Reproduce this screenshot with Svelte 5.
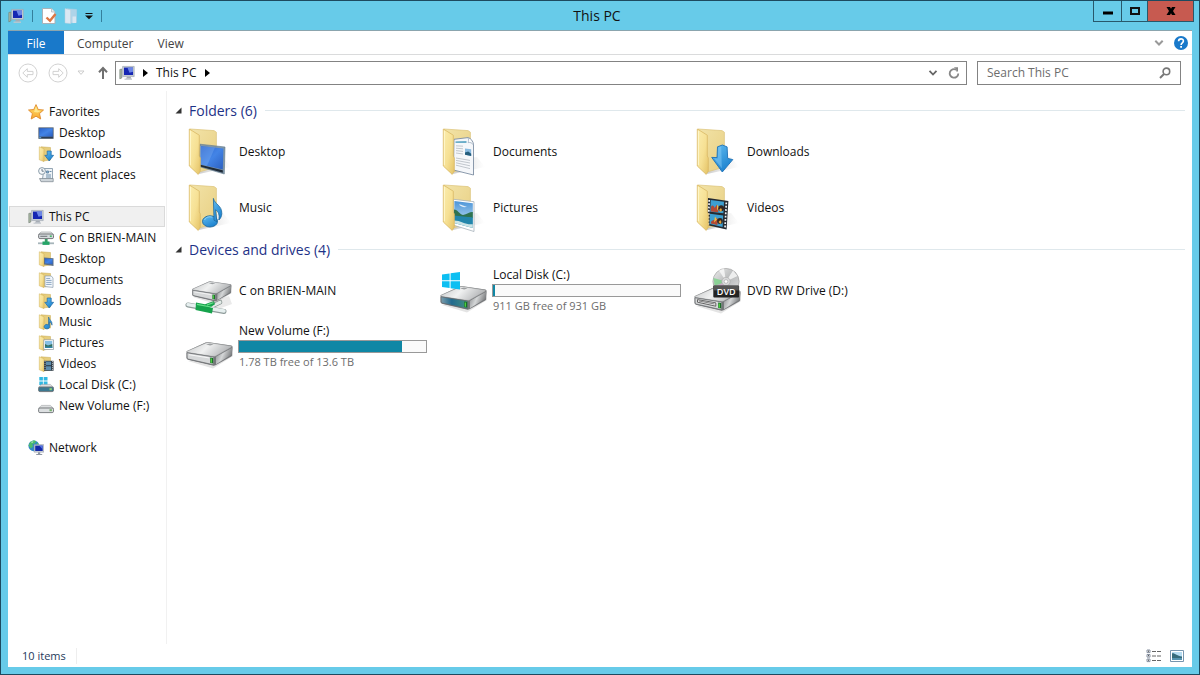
<script>
  const favorites = [
    { icon: 'desktop', label: 'Desktop' },
    { icon: 'f-downloads', label: 'Downloads' },
    { icon: 'recent', label: 'Recent places' }
  ];
  const places = [
    { icon: 'netdrive', label: 'C on BRIEN-MAIN' },
    { icon: 'f-desktop', label: 'Desktop' },
    { icon: 'f-documents', label: 'Documents' },
    { icon: 'f-downloads', label: 'Downloads' },
    { icon: 'f-music', label: 'Music' },
    { icon: 'f-pictures', label: 'Pictures' },
    { icon: 'f-videos', label: 'Videos' },
    { icon: 'osdrive', label: 'Local Disk (C:)' },
    { icon: 'drive', label: 'New Volume (F:)' }
  ];
  const tree = [
    { icon: 'star', label: 'Favorites', children: favorites },
    { icon: 'pc', label: 'This PC', selected: true, children: places },
    { icon: 'network', label: 'Network', children: [] }
  ];
  const folders = ['Desktop', 'Documents', 'Downloads', 'Music', 'Pictures', 'Videos'];
  const drives = [
    { kind: 'net', label: 'C on BRIEN-MAIN' },
    { kind: 'os', label: 'Local Disk (C:)', used: 1, free: '911 GB free of 931 GB' },
    { kind: 'dvd', label: 'DVD RW Drive (D:)' },
    { kind: 'plain', label: 'New Volume (F:)', used: 87, free: '1.78 TB free of 13.6 TB' }
  ];
  let query = $state('');
  let openFolders = $state(true);
  let openDrives = $state(true);
</script>

{#snippet smallIcon(name)}
  <svg class="small" viewBox="0 0 16 16" aria-hidden="true">
    {#if name.startsWith('f-')}
      <path d="M3 .8 12.5 1.5V14L5 15z" fill="#e6cd7c" stroke="#c9aa53" stroke-width=".5" />
      <path d="M1.3.8 6 2.8V15.6L1.3 13.8z" fill="url(#flap)" stroke="#cfae55" stroke-width=".5" />
    {/if}
    {#if name === 'pc'}
      <path d="M.8 4.5 2.8 4V13l-2 .8z" fill="#a9b8a2" stroke="#6f7b72" stroke-width=".6" />
      <path d="M3.6 1.4h11.6v10.2H3.6z" fill="#c4cbd2" stroke="#9aa3ad" stroke-width=".6" />
      <path d="M5 2.6h9v7.4H5z" fill="#1627b3" />
      <path d="M8.4 2.6H14v4.2L10.5 7.8z" fill="#6c86e6" />
      <path d="M8 11.8h3.6l.8 2H7z" fill="#a6acb4" />
      <path d="M5.5 13.6h7.5v1.2H5.5z" fill="#c3c8ce" />
    {:else if name === 'star'}
      <path d="M8 .6 10.2 5.5 15.5 6 11.5 9.6 12.7 15 8 12.2 3.2 15 4.4 9.6.5 6 5.8 5.5z" fill="url(#gold)" stroke="#e08a2c" stroke-width=".9" stroke-linejoin="round" />
      <path d="M8 2.6 9.5 6.4 13 6.8 9.9 8.6 6 8z" fill="#fff3a6" opacity=".7" />
    {:else if name === 'desktop'}
      <path d="M.4 2.4h15.2v11.4H.4z" fill="#4b5869" />
      <path d="M1.2 3.2h13.6v8.4H1.2z" fill="url(#screen)" />
      <path d="M1.2 12.2h13.6v1H1.2z" fill="#27384b" /><path d="M1.2 12.2h2v1h-2z" fill="#68b6e7" />
    {:else if name === 'recent'}
      <path d="M6 1.5h8.5V12H4.5z" fill="#eef3f7" stroke="#7c91a2" stroke-width=".8" />
      <path d="M8.5 4h2v2h-2zM11.5 4.5h2M8 8h5M8 10h5" stroke="#6b8ca8" fill="#7fb1d8" />
      <path d="M1.5 11.5h13.7v3.2H3z" fill="#ced5da" stroke="#7a858e" stroke-width=".7" />
      <circle cx="4" cy="4" r="3.4" fill="#f6f9fb" stroke="#7f929f" stroke-width=".9" /><path d="M4 2v2.2h1.8" fill="none" stroke="#4c6173" stroke-width=".8" />
    {:else if name === 'f-downloads'}
      <path d="M9.2 5h4v4.3h2.4L11.2 15 6.8 9.3h2.4z" fill="url(#blue)" stroke="#1e68a5" stroke-width=".7" />
    {:else if name === 'f-desktop'}
      <path d="M6 6.6 15.5 7.2V15L6 13.6z" fill="#5d6f83" /><path d="M7 7.6 14.6 8.1V13.2L7 12.3z" fill="url(#screen)" />
    {:else if name === 'f-documents'}
      <path d="M7 4h6.3L15 6v9.4L7 14.6z" fill="#f5f9fd" stroke="#8798aa" stroke-width=".7" /><path d="M8.2 6.4h4M8.2 8.4h5.4M8.2 10.4h5.4M8.2 12.4h5.4" stroke="#7f9cbb" stroke-width=".9" />
    {:else if name === 'f-music'}
      <path d="M10.6 3c.4 3 4.2 4 3.4 8.2-.4-2-1.4-3-2.4-3.2l.1 4.8a2.8 2.2 0 1 1-1.2-1.9z" fill="url(#blue)" stroke="#1c5f96" stroke-width=".6" />
    {:else if name === 'f-pictures'}
      <path d="M5.8 4.8h9.7v9.7H5.8z" fill="#fff" stroke="#8b97a1" stroke-width=".7" /><path d="M7 6h7.3v7H7z" fill="#86bfe4" /><path d="M7 9l3 1.5L14.3 9v4H7z" fill="#38705b" /><path d="M7 11.5h7.3V13H7z" fill="#2f84a8" />
    {:else if name === 'f-videos'}
      <path d="M6 4.8h9.5v10H6z" fill="#28323b" /><path d="M8 5.5h5.2v3.8H8zM8 10.2h5.2v4H8z" fill="#5d8cad" /><path d="M7 5.2V15M14.5 5.2V15" stroke="#dce4ea" stroke-width=".9" stroke-dasharray="1 1" />
    {:else if name === 'drive' || name === 'osdrive'}
      {#if name === 'osdrive'}
        <path d="M1.3 0h3.6v3.6H1.3zM5.7 0h3.8v3.6H5.7zM1.3 4.4h3.6V8H1.3zM5.7 4.4h3.8V8H5.7z" fill="#31b8e2" />
      {/if}
      <path d="M3.4 7.4h9L15.5 10.4H.5z" fill="#dcdedf" stroke="#a1a5a8" stroke-width=".6" />
      <rect x=".6" y="10" width="14.9" height="4.6" rx="1.3" fill={name === 'drive' ? '#dcdfe1' : '#3c7891'} stroke="#6d7275" stroke-width=".9" />
      <path d="M11.5 11.2h2.4v2h-2.4z" fill={name === 'drive' ? '#75ae6e' : '#8bd374'} />
    {:else if name === 'netdrive'}
      <path d="M3 2h10l2.5 2.4H.5z" fill="#e5e7e8" stroke="#979b9e" stroke-width=".6" />
      <rect x=".6" y="4" width="14.9" height="4.6" rx="1.3" fill="#d5d9dc" stroke="#66696c" stroke-width=".9" />
      <path d="M2.3 6.3h7" stroke="#6d7377" /><path d="M11.8 5.4h2v1.6h-2z" fill="#47b768" />
      <path d="M6.8 9h2.8v3H6.8z" fill="#3d9a67" /><path d="M0 12.4h16v1.8H0z" fill="#a6b5ba" /><path d="M4.5 11.5h7v3.4h-7z" fill="#25a568" />
    {:else if name === 'network'}
      <circle cx="5.8" cy="5.8" r="5.4" fill="#2f86c8" /><path d="M2 2.4C4 .4 7 .2 8.3 1.2L6.8 3.5 4.4 4 5 6.4 2.8 8.5.6 5.6zM9 2l2.2 3-2.4.8z" fill="#4dbb6b" /><path d="M3 1.8 5.6 1.4 4 3z" fill="#d0f1df" />
      <path d="M6.2 4.6h9.5v7.6H6.2z" fill="#d0d5dc" stroke="#89919c" stroke-width=".5" /><path d="M7.2 5.6h7.5v5.4H7.2z" fill="#1429a9" /><path d="M11 5.6h3.7v3.6z" fill="#5473e0" /><path d="M10 12.3h2.2v1.8h2v1H8.2v-1H10z" fill="#8e96a3" />
    {/if}
  </svg>
{/snippet}

{#snippet folderIcon(name)}
  <svg class="large" viewBox="0 0 48 48" aria-hidden="true">
    <path d="M14 46 L46 39 L38 29 L16 32z" fill="url(#shade)" />
    <path d="M5 1 29 2.6l2.4 1.6V39L14 44z" fill="url(#back)" stroke="#dcc47b" stroke-width=".7" />
    {#if name === 'Desktop'}
      <path d="M15 16.2 40 19 39.3 46 14 38.6z" fill="#7f96a9" stroke="#62788a" stroke-width=".6" />
      <path d="M16 18 38.4 20.5 37.8 41.6 15.6 36.4z" fill="url(#screen)" />
      <path d="M15 18 30 19.6 22 37.8 15 36.2z" fill="#8dbdf6" opacity=".3" />
      <path d="M14.4 36.6 37.8 42.2 37.8 44.8 14.2 38.2z" fill="#1f2b38" />
    {:else if name === 'Documents'}
      <path d="M15 11.3 29 9.6c3 .6 5.4 4 5.5 7V47L14.5 42z" fill="#f5f7fa" stroke="#6f8298" stroke-width=".8" />
      <path d="M29 9.6c1 2 .4 4 .2 5 2-.6 4 .4 5.3 2.4" fill="#fff" stroke="#7f96ad" stroke-width=".6" />
      <path d="M16.5 14.2 27.5 14" stroke="#3d94b7" stroke-width="1.3" />
      <path d="M17 17.8l7 .4M17 20.2l7 .6M17 22.6l7 .8M17 25l7 1M17 30l14 2.4M17 32.4l14 2.6M17 34.8l14 3M17 37.2l14 3.4" stroke="#b4bac2" stroke-width=".8" />
      <path d="M26 20.5 32.2 21.2V28L26 26.8z" fill="#8abbe0" /><path d="M26 24.5l3.2-1 3 2.3V28L26 26.8z" fill="#245d7c" />
    {:else if name === 'Downloads'}
      <path d="M24.5 18.8 29.4 17 34.1 18.9 34.7 30.4 39.8 31.6 29.3 44 18.7 29.4 24 29.6z" fill="url(#blue)" stroke="#1d70b7" stroke-width=".9" />
      <path d="M25.3 19.5 28.2 18.3 28.8 40.3 21 30.2 24.8 30.5z" fill="#8bd0fa" opacity=".45" />
    {:else if name === 'Music'}
      <ellipse cx="25" cy="37.4" rx="7.5" ry="5.6" fill="url(#blue)" stroke="#1c689e" stroke-width=".9" />
      <path d="M28.4 14.4c1.4 6 8.6 7 8.4 15-.1 3-1.3 5.2-3 6.6 1-4.8-.3-8.5-3.3-10.2L32 37.8l-3-1.6z" fill="url(#blue)" stroke="#1c689e" stroke-width=".8" />
      <path d="M19.6 36c1-3 5-3.8 7.6-2.8" fill="none" stroke="#8fd4f5" stroke-width="1" />
    {:else if name === 'Pictures'}
      <path d="M14.4 15.3 35 17.7V47.5L14 41z" fill="#fff" stroke="#9ba8b1" stroke-width=".7" />
      <path d="M15.4 17 33.8 19.3V44L15 39z" fill="url(#sky)" />
      <path d="M15 25.5c4 0 5 4.5 9 5.5 4-1 7-3.4 9.8-3V34L15 32.5z" fill="#2f7350" /><path d="M15 31.5 33.8 33.5V44L15 39z" fill="#2386ab" /><path d="M15 36.4c7 0 12 4.8 18.8 3.8V44L15 39z" fill="#cce4e5" />
      <path d="M20 20.2c3 .2 5 2 8 2.6-3 1-7-.4-8-2.6z" fill="#fff" opacity=".8" />
    {:else}
      <path d="M15 14 35.4 17 33.6 45.6 13.7 41z" fill="#242a31" />
      <path d="M17.7 16 31 17.8 30.4 29.3 17.2 27.8zM17 29.8 30.2 31.6 29.6 43 16.6 40z" fill="#3d9fd0" />
      <path d="M18 23c1.4-3 3-1 3.6 1l2-3 2 1.6-.4 5.6-7.4-.8zM18 38c2-3 4-1 5-4l2 1-.6 6-6.6-1.4z" fill="#b34a34" />
      <path d="M24 20.5l2 3-2 3zM22 32.5l2 3-3 3z" fill="#f0bd42" /><circle cx="28.2" cy="24.2" r="2.9" fill="#342620" /><circle cx="27" cy="37" r="2.9" fill="#342620" /><path d="M26 26l2-2 1 2-1 2zM25.5 38l1.8-2 1.2 2-1 2z" fill="#e5a338" />
      <path d="M16.2 16 15.3 41M33.3 18.5 32 44.4" stroke="#f3f5f7" stroke-width="1.7" stroke-dasharray="1.8 1.5" />
    {/if}
    <path d="M4.3 1 14.3 7.2V28L15.3 30V43L13.2 46.4 4.3 38z" fill="url(#flap)" stroke="#d9b965" stroke-width=".8" stroke-linejoin="round" />
    <path d="M5.4 2.8V37.2" stroke="#fff8cf" stroke-width=".9" />
  </svg>
{/snippet}

{#snippet driveBody(dvd, os)}
  <path d="M3 38 28 45.5 48 33 46 27z" fill="#777" opacity=".2" />
  <path d="M1.6 28.2 20.5 19.6q1.6-.6 3.3-.3l22.6 3.2q1.4.5 1.2 1.7l-.4 7.5q0 1-1 1.7L30.5 42.2q-1.3.7-2.8.3L3 36.8Q1.6 36.2 1.5 35z" fill="#77797c" />
  <path d="M2 28.2 21 20q1.6-.5 3-.2L46 23q1.4.4.3 1.2L30.8 33q-1.3.6-2.8.4L3 29.5q-1.6-.5-1-1.3z" fill="url(#metal)" stroke="#929496" stroke-width=".4" />
  <path d="M31 33.7 47.2 24.7 46.8 31.6 31 41.3z" fill="url(#side)" />
  <path d="M2 29.8 28.8 34 28.6 41.8 3 36q-.7-.2-.8-1z" fill={os ? 'url(#osface)' : '#d6d8d9'} stroke="#66696c" stroke-width=".7" />
  <path d="M4 31.7 24 34.9" stroke="#fff" opacity={os ? 0 : 0.8} />
  <path d="M21 21.5l4-.9 3.6.8-3.5 1.1z" fill="#9da0a2" />
  <path d="M25.2 34.6 28.2 35.1V40.6L25.2 40z" fill="#1b6b2a" /><path d="M26.3 35.5V39.7" stroke="#54e342" stroke-width="1.1" />
  {#if dvd}
    <path d="M4.5 31.6 22.8 34.8V38.2L4.5 34.2z" fill="#eee" stroke="#444" stroke-width=".8" /><path d="M6 33 21.5 36" stroke="#555" stroke-width=".7" />
  {/if}
{/snippet}

{#snippet driveIcon(kind)}
  <svg class="large" viewBox="0 0 48 48" aria-hidden="true">
    {#if kind === 'net'}
      <path d="M28 44 47 37 44 29 22 36z" fill="#888" opacity=".18" />
      <path d="M25 40 35 35.2" stroke="#7e8c88" stroke-width="4.6" stroke-linecap="round" /><path d="M26 39.5 35 35.2" stroke="#e3ebe8" stroke-width="3.2" stroke-linecap="round" />
      <path d="M3 38 39 44.5" stroke="#8f9c9b" stroke-width="5" stroke-linecap="round" /><path d="M3 37.6 39 44" stroke="#e6efef" stroke-width="3.4" stroke-linecap="round" />
      <path d="M11 35.6 20 37.2 29 34 30 37.2 25 40.5 28 41 27 46.4 10.5 43z" fill="#16a34c" /><path d="M12 37.3 26 40M22 38 28.4 35.6" stroke="#66df89" stroke-width="1.2" />
      <g transform="translate(6 -2) scale(.85)">{@render driveBody(false, false)}</g>
    {:else if kind === 'plain'}
      {@render driveBody(false, false)}
    {:else if kind === 'os'}
      {@render driveBody(false, true)}
      <path d="M3 7.6 10.6 6.5V13.3H3zM11.6 6.3 21 5V13.3H11.6zM3 14.3H10.6V21.1L3 20zM11.6 14.3H21V22.4L11.6 21.2z" fill="#0dbff2" />
    {:else}
      <g transform="translate(0 1)">{@render driveBody(true, false)}</g>
      <circle cx="33" cy="14.5" r="13.1" fill="url(#disc)" stroke="#999" stroke-width=".6" />
      <path d="M33 14.5 20.5 11 22 21z" fill="#76d384" opacity=".75" /><path d="M33 14.5 21 19 24 24z" fill="#e0a2d7" opacity=".6" /><path d="M33 14.5 40 3.5 44.5 9z" fill="#fff" opacity=".75" /><path d="M33 14.5 26 3.5 31 1.5z" fill="#fff" opacity=".7" />
      <circle cx="33" cy="14.5" r="4.2" fill="#d8d9da" stroke="#a6a6a6" stroke-width=".6" /><circle cx="33" cy="14.5" r="1.8" fill="#fff" stroke="#999" stroke-width=".5" />
      <rect x="20.3" y="18.6" width="25.8" height="12" rx="1" fill="#232323" /><path d="M20.6 19h25.2v4.4H20.6z" fill="#555" />
      <text x="33.2" y="28.4" text-anchor="middle" class="dvd">DVD</text>
    {/if}
  </svg>
{/snippet}

<div class="window">
  <svg width="0" height="0" aria-hidden="true">
    <defs>
      <linearGradient id="flap" x1="0" x2="1" y2="1"><stop stop-color="#fbedae" /><stop offset=".55" stop-color="#f6e093" /><stop offset="1" stop-color="#e4c265" /></linearGradient>
      <linearGradient id="back" x2="1" y2="1"><stop stop-color="#f2e3a8" /><stop offset="1" stop-color="#e8cf82" /></linearGradient>
      <linearGradient id="shade" x2="1"><stop stop-color="#999" stop-opacity=".5" /><stop offset="1" stop-color="#bbb" stop-opacity="0" /></linearGradient>
      <linearGradient id="screen" x2="1" y2="1"><stop stop-color="#2b62cb" /><stop offset=".5" stop-color="#4384e6" /><stop offset="1" stop-color="#2b5fc0" /></linearGradient>
      <linearGradient id="blue" x2=".6" y2="1"><stop stop-color="#63bdf0" /><stop offset="1" stop-color="#1c82cf" /></linearGradient>
      <linearGradient id="sky" x2="0" y2="1"><stop stop-color="#4b94d8" /><stop offset="1" stop-color="#d4ecf8" /></linearGradient>
      <linearGradient id="gold" x2="0" y2="1"><stop stop-color="#ffe36e" /><stop offset="1" stop-color="#f7a832" /></linearGradient>
      <linearGradient id="metal" x2="1" y2=".3"><stop stop-color="#c6c8c9" /><stop offset=".5" stop-color="#f0f1f1" /><stop offset="1" stop-color="#b4b6b8" /></linearGradient>
      <linearGradient id="side" x2="1" y2=".4"><stop stop-color="#85888a" /><stop offset=".5" stop-color="#d4d6d7" /><stop offset="1" stop-color="#77797b" /></linearGradient>
      <linearGradient id="osface" x2="1"><stop stop-color="#7d9dac" /><stop offset=".4" stop-color="#216a8e" /><stop offset="1" stop-color="#459280" /></linearGradient>
      <linearGradient id="disc" x2="1" y2="1"><stop stop-color="#eee" /><stop offset=".5" stop-color="#b8babb" /><stop offset="1" stop-color="#e5e5e5" /></linearGradient>
    </defs>
  </svg>
  <header class="titlebar">
    <div class="quick">
      {@render smallIcon('pc')}
      <span class="bar"></span>
      <button aria-label="Properties">
        <svg class="small" viewBox="0 0 16 16"><path d="M1.5.5h9L14 4v11.5H1.5z" fill="#fff" stroke="#a9b2b8" /><path d="M10.5.5V4H14" fill="#e9edf0" stroke="#a9b2b8" stroke-width=".7" /><path d="M5.5 9.5 9 12.8 14.5 6" fill="none" stroke="#dc7743" stroke-width="2.4" /></svg>
      </button>
      <button aria-label="New folder">
        <svg class="small" viewBox="0 0 16 16"><path d="M4 .8 13.5 1.5V14.5L6 15z" fill="#afd4e9" stroke="#b7cfe0" stroke-width=".5" /><path d="M2 .6 7.6 2V15.6L2 15z" fill="#dbe8f3" stroke="#bbcedd" stroke-width=".5" /><path d="M9.5 8.5H13V15H9.5z" fill="#d8e6f1" /></svg>
      </button>
      <button aria-label="Customize Quick Access Toolbar">
        <svg width="8" height="8" viewBox="0 0 8 8"><path d="M.5 1.5h7" stroke="#111" /><path d="M0 3.5h8L4 7.3z" fill="#111" /></svg>
      </button>
      <span class="bar"></span>
    </div>
    <h1>This PC</h1>
    <div class="controls">
      <button class="min" aria-label="Minimize"><svg width="12" height="10" viewBox="0 0 12 10"><path d="M1 5.5h10v3H1z" /></svg></button>
      <button class="max" aria-label="Maximize"><svg width="12" height="10" viewBox="0 0 12 10"><path d="M2 2h8v6H2z" fill="none" stroke="#111" stroke-width="2" /></svg></button>
      <button class="close" aria-label="Close"><svg width="12" height="10" viewBox="0 0 12 10"><path d="M1.5 1H5L6 2.8 7 1h3.5L8 5l2.5 4H7L6 7.2 5 9H1.5L4 5z" /></svg></button>
    </div>
  </header>

  <div class="client">
    <nav class="tabs" aria-label="Ribbon">
      <button class="file">File</button>
      <button>Computer</button>
      <button>View</button>
      <span class="fill"></span>
      <button class="glyph" aria-label="Expand the Ribbon"><svg width="10" height="8" viewBox="0 0 10 8"><path d="M1.3 1.8 5 5.5 8.7 1.8" fill="none" stroke="#999" stroke-width="2" /></svg></button>
      <button class="glyph" aria-label="Help"><svg width="14" height="14" viewBox="0 0 14 14"><circle cx="7" cy="7" r="7" fill="#1979ca" /><path d="M4.6 5.2C4.6 2 9.5 2.2 9.4 5c0 1.8-2.3 1.8-2.3 3.9" fill="none" stroke="#fff" stroke-width="1.6" /><path d="M6.2 10h1.8v1.7H6.2z" fill="#fff" /></svg></button>
    </nav>

    <div class="address-row">
      <div class="history">
        <button aria-label="Back"><svg width="20" height="20" viewBox="0 0 20 20"><circle cx="10" cy="10" r="9" fill="none" stroke="#d2d2d2" /><path d="M4.8 10 9.3 5.7V8.4H15v3.2H9.3v2.7z" fill="none" stroke="#cdcdcd" stroke-width=".9" /></svg></button>
        <button aria-label="Forward"><svg width="20" height="20" viewBox="0 0 20 20"><circle cx="10" cy="10" r="9" fill="none" stroke="#d2d2d2" /><path d="M15.2 10 10.7 5.7V8.4H5v3.2h5.7v2.7z" fill="none" stroke="#cdcdcd" stroke-width=".9" /></svg></button>
        <button aria-label="Recent locations"><svg width="8" height="6" viewBox="0 0 8 6"><path d="M1 1h6L4 4.4z" fill="none" stroke="#ccc" /></svg></button>
        <button aria-label="Up"><svg width="10" height="14" viewBox="0 0 10 14"><path d="M5 13V2.5M1 6.3 5 2l4 4.3" fill="none" stroke="#707070" stroke-width="2" /></svg></button>
      </div>
      <div class="address">
        {@render smallIcon('pc')}
        <svg class="crumb" viewBox="0 0 5 8" aria-hidden="true"><path d="M0 0 5 4 0 8z" /></svg>
        <button>This PC</button>
        <svg class="crumb" viewBox="0 0 5 8" aria-hidden="true"><path d="M0 0 5 4 0 8z" /></svg>
        <span class="fill"></span>
        <button aria-label="Previous locations"><svg width="10" height="8" viewBox="0 0 10 8"><path d="M1.5 1.8 5 5.5 8.5 1.8" fill="none" stroke="#666" stroke-width="1.8" /></svg></button>
        <button aria-label="Refresh"><svg width="12" height="12" viewBox="0 0 12 12"><path d="M8.2 2.7A4.3 4.3 0 1 0 10.3 6.4" fill="none" stroke="#888" stroke-width="1.8" /><path d="M5.8.2H10v4.4H8.2V2.2z" fill="#888" /></svg></button>
      </div>
      <div class="search">
        <input type="search" bind:value={query} placeholder="Search This PC" aria-label="Search This PC" />
        <svg width="12" height="12" viewBox="0 0 12 12" aria-hidden="true"><circle cx="7.4" cy="4.4" r="3.3" fill="none" stroke="#777" stroke-width="1.6" /><path d="M5 7 1 11" stroke="#777" stroke-width="2" /></svg>
      </div>
    </div>

    <div class="body">
      <nav class="tree" aria-label="Navigation pane">
        {#each tree as group}
          <div class="group">
            <a class="root" class:selected={group.selected} href="#{group.label}">{@render smallIcon(group.icon)}{group.label}</a>
            {#each group.children as item}
              <a href="#{item.label}">{@render smallIcon(item.icon)}{item.label}</a>
            {/each}
          </div>
        {/each}
      </nav>

      <main>
        <section>
          <h2><button onclick={() => (openFolders = !openFolders)} aria-expanded={openFolders}><svg width="7" height="7" viewBox="0 0 7 7" aria-hidden="true"><path d="M6.5.5V6.5H.5z" /></svg>Folders (6)</button></h2>
          {#if openFolders}
            <div class="tiles">
              {#each folders as name}
                <button class="tile">{@render folderIcon(name)}<span>{name}</span></button>
              {/each}
            </div>
          {/if}
        </section>
        <section>
          <h2><button onclick={() => (openDrives = !openDrives)} aria-expanded={openDrives}><svg width="7" height="7" viewBox="0 0 7 7" aria-hidden="true"><path d="M6.5.5V6.5H.5z" /></svg>Devices and drives (4)</button></h2>
          {#if openDrives}
            <div class="tiles">
              {#each drives as drive}
                <button class="tile">
                  {@render driveIcon(drive.kind)}
                  <span class="info">
                    <span>{drive.label}</span>
                    {#if drive.free}
                      <span class="usage"><span class="used" style="width: {drive.used}%"></span></span>
                      <span class="free">{drive.free}</span>
                    {/if}
                  </span>
                </button>
              {/each}
            </div>
          {/if}
        </section>
      </main>
    </div>

    <footer>
      <span class="count">10 items</span>
      <span class="fill"></span>
      <button aria-label="Details view"><svg width="16" height="14" viewBox="0 0 16 14"><path d="M1 1h3v2.6H1zM1 5.5h3v2.6H1zM1 10h3v2.6H1z" fill="#fff" stroke="#8993a3" /><path d="M2 2.2h1M2 6.7h1M2 11.2h1" stroke="#333" /><path d="M6 2.5h4M11 2.5h4M6 7h4M11 7h4M6 11.5h4M11 11.5h4" stroke="#666" /></svg></button>
      <button aria-label="Large icons view"><svg width="14" height="12" viewBox="0 0 14 12"><path d="M.5.5h13v11H.5z" fill="#fff" stroke="#7895ae" /><path d="M2 2h10v8H2z" fill="#b5dcf2" /><path d="M2 3.4C5 3 7 6 12 6.6V8H2z" fill="#356b7b" /><path d="M2 8h10v2H2z" fill="#5593b0" /></svg></button>
    </footer>
  </div>
</div>

<style>
  :global(body) { margin: 0; }
  .window {
    box-sizing: border-box;
    min-height: 100vh;
    display: flex;
    flex-direction: column;
    padding: 0 7px 7px;
    border: 1px solid #1d4a5f;
    background: #67cbe9;
    color: #111;
    font: 12px/16px "Open Sans", "Noto Sans", sans-serif;
  }
  button {
    padding: 0;
    border: 0;
    background: none;
    color: inherit;
    font: inherit;
    text-align: left;
  }
  svg { display: block; flex: none; }
  .small { width: 16px; height: 16px; }
  .large { width: 48px; height: 48px; overflow: visible; }
  .dvd { font: 600 9px "Open Sans", sans-serif; fill: #fff; }
  .fill { flex: 1; }

  .titlebar {
    display: grid;
    grid-template-columns: 1fr auto 1fr;
    height: 29px;
  }
  .quick { display: flex; align-items: center; gap: 6px; }
  .quick .bar { width: 1px; height: 12px; margin: 0 2px; background: #347f9c; }
  h1 { margin: 0; padding-right: 6px; font-size: 14px; line-height: 30px; font-weight: 400; }
  .controls { display: flex; justify-content: flex-end; align-items: flex-start; margin-right: -2px; }
  .controls button {
    display: flex;
    align-items: center;
    justify-content: center;
    box-sizing: border-box;
    height: 21px;
    border: 1px solid #28586b;
    border-top: 0;
  }
  .controls .min { width: 29px; }
  .controls .max { width: 25px; border-width: 0 0 1px; }
  .controls .close { width: 47px; background: #c75a50; }

  .client {
    flex: 1;
    display: flex;
    flex-direction: column;
    border-top: 1px solid #8ba5ae;
    background: #fff;
  }
  .tabs {
    display: flex;
    align-items: center;
    height: 23px;
    padding-right: 4px;
    border-bottom: 1px solid #dadbdc;
    color: #444;
  }
  .tabs button { height: 23px; line-height: 25px; padding: 0 11px 0 13px; }
  .tabs .file { width: 56px; padding: 0; background: #1979ca; color: #fff; text-align: center; }
  .tabs .glyph { display: flex; align-items: center; padding: 0; margin-left: 10px; }

  .address-row { display: flex; align-items: center; padding: 6px 11px 6px 10px; }
  .history { display: flex; align-items: center; gap: 10px; width: 97px; }
  .history button:nth-child(3) { margin-left: -1px; }
  .history button:nth-child(4) { margin-left: 3px; }
  .address, .search {
    display: flex;
    align-items: center;
    box-sizing: border-box;
    height: 24px;
    border: 1px solid #838383;
  }
  .address { flex: 1; gap: 8px; padding: 0 5px 0 3px; }
  .address .crumb { width: 5px; height: 8px; }
  .address button:nth-of-type(n + 2) { padding: 0 1px; }
  .search { width: 204px; margin-left: 10px; padding: 0 9px; }
  .search input {
    flex: 1;
    min-width: 0;
    padding: 0;
    border: 0;
    outline: 0;
    background: none;
    color: #111;
    font: inherit;
  }
  .search input::placeholder { color: #6d6d6d; opacity: 1; }

  .body { flex: 1; display: flex; }
  .tree {
    box-sizing: border-box;
    width: 159px;
    padding: 10px 1px 0;
    border-right: 1px solid #f1f1f1;
  }
  .group { padding-bottom: 21px; }
  .tree a {
    display: flex;
    align-items: center;
    gap: 5px;
    height: 21px;
    padding-left: 29px;
    color: #111;
    text-decoration: none;
    white-space: nowrap;
  }
  .tree .root { padding-left: 19px; }
  .tree .selected {
    box-sizing: border-box;
    padding-left: 18px;
    border: 1px solid #dadada;
    background: #f0f0f0;
  }
  main { flex: 1; padding: 6px 0 0 8px; }
  h2 {
    display: flex;
    align-items: center;
    gap: 8px;
    margin: 0;
    padding-right: 7px;
    color: #1e3287;
    font-size: 14px;
    line-height: 27px;
    font-weight: 400;
  }
  h2::after { content: ""; flex: 1; height: 1px; background: #dfe8ec; }
  h2 button { display: flex; align-items: center; gap: 7px; }
  h2 svg { fill: #333; }
  .tiles {
    display: grid;
    grid-template-columns: repeat(auto-fill, 254px);
    grid-auto-rows: 56px;
    padding-left: 10px;
  }
  .tile { display: flex; align-items: center; gap: 6px; }
  .info { display: flex; flex-direction: column; gap: 1px; }
  .usage {
    box-sizing: border-box;
    width: 189px;
    height: 13px;
    margin-left: -1px;
    border: 1px solid #999;
    background: #fafafa;
  }
  .used { display: block; height: 100%; background: #0f87a5; }
  .free { padding-bottom: 2px; color: #6d6d6d; font-size: 11px; }

  footer {
    display: flex;
    align-items: center;
    gap: 8px;
    height: 23px;
    padding: 0 8px 0 14px;
    color: #1e395b;
  }
  .count { padding-right: 10px; border-right: 1px solid #eee; font-size: 11px; }
</style>
